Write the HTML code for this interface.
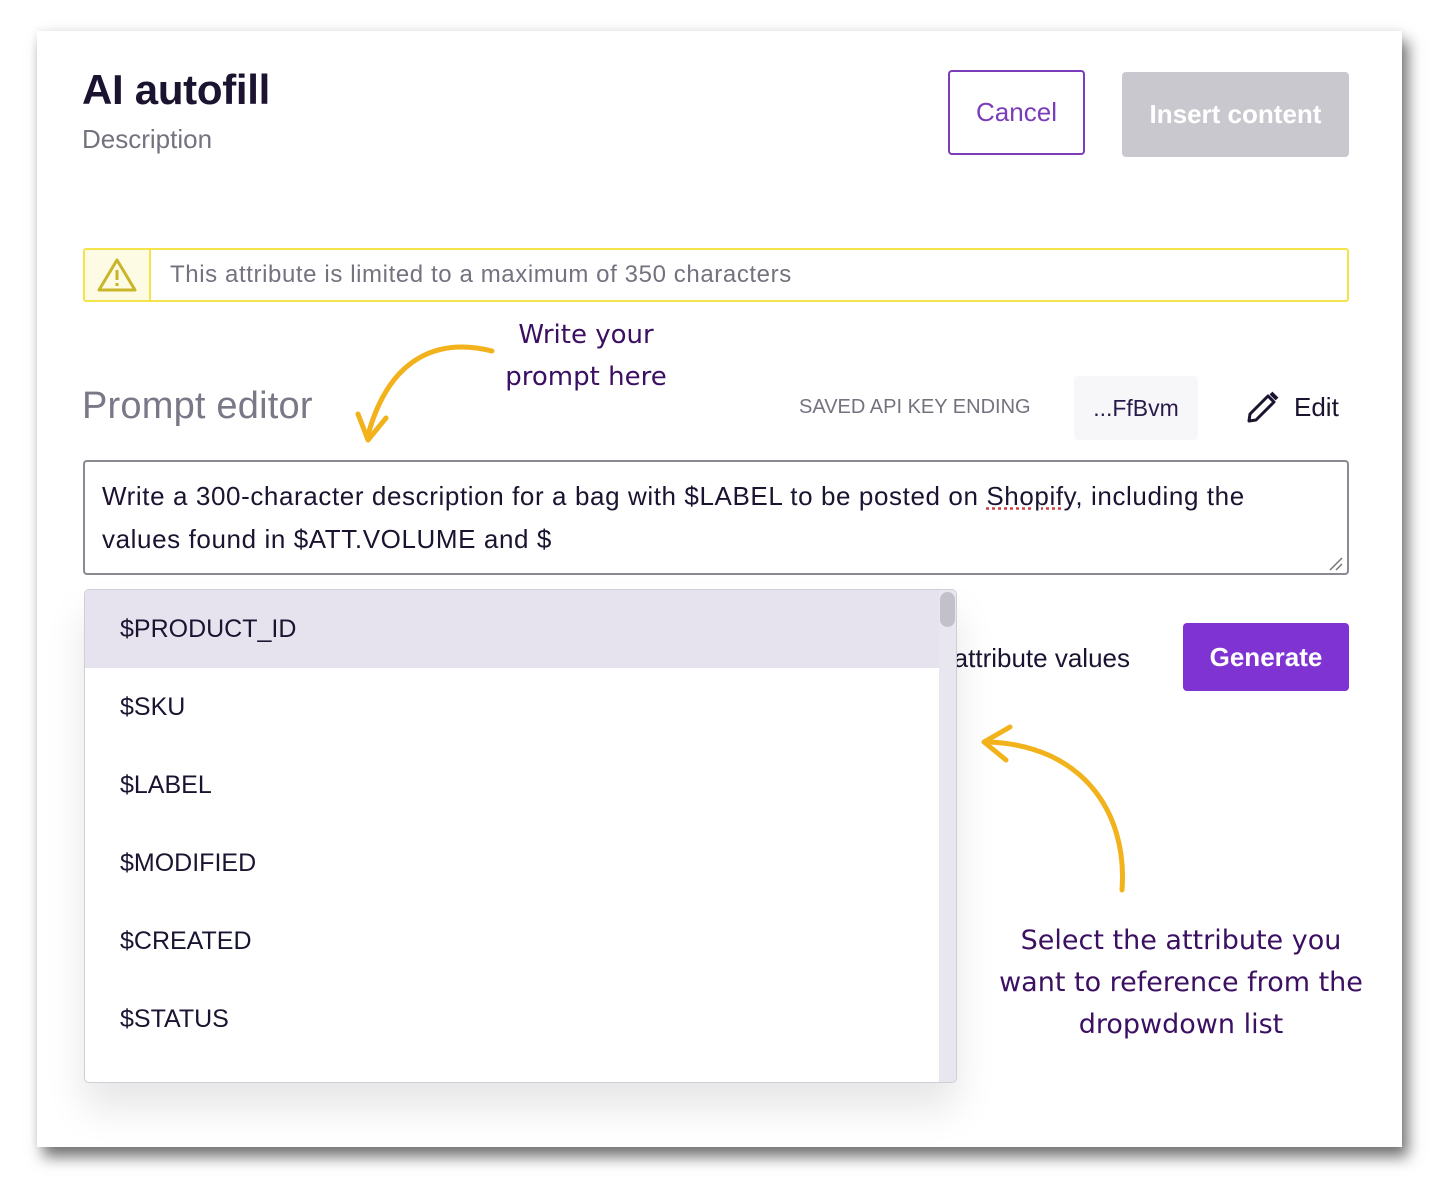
<!DOCTYPE html>
<html><head><meta charset="utf-8"><style>
*{box-sizing:border-box;margin:0;padding:0}
body{width:1437px;height:1200px;background:#fff;position:relative;overflow:hidden;font-family:"Liberation Sans",sans-serif}
.abs{position:absolute;white-space:nowrap}
.card{position:absolute;left:37px;top:31px;width:1365px;height:1116px;background:#fff;box-shadow:6px 10px 14px rgba(0,0,0,.55),0 -2px 8px rgba(0,0,0,.06)}
.ann{color:#3b0f62;font-family:"DejaVu Sans",sans-serif;font-size:26px;text-align:center;line-height:42px}
</style></head><body>
<div class="card"></div>
<div class="abs" style="left:82px;top:66px;font-size:42px;font-weight:bold;color:#1b1330;letter-spacing:-.3px">AI autofill</div>
<div class="abs" style="left:82px;top:124px;font-size:26px;color:#75727f">Description</div>
<div class="abs" style="left:948px;top:70px;width:137px;height:85px;border:2px solid #7a3cb8;border-radius:4px;color:#7a3cb8;font-size:26px;display:flex;align-items:center;justify-content:center">Cancel</div>
<div class="abs" style="left:1122px;top:72px;width:227px;height:85px;background:#c9c8cf;border-radius:4px;color:#fff;font-size:26px;font-weight:bold;display:flex;align-items:center;justify-content:center">Insert content</div>

<div class="abs" style="left:83px;top:248px;width:1266px;height:54px;border:2px solid #f2e44a;border-radius:3px"></div>
<div class="abs" style="left:85px;top:250px;width:66px;height:50px;background:#fdfbe3;border-right:2px solid #f2e44a"></div>
<svg class="abs" style="left:96px;top:257px" width="42" height="36" viewBox="0 0 42 36"><path d="M21 3 L39 33 L3 33 Z" fill="none" stroke="#c9b52a" stroke-width="3" stroke-linejoin="round"/><rect x="19.5" y="13" width="3" height="10" fill="#c9b52a"/><rect x="19.5" y="26" width="3" height="3" fill="#c9b52a"/></svg>
<div class="abs" style="left:170px;top:261px;font-size:24px;color:#75727f;letter-spacing:.6px">This attribute is limited to a maximum of 350 characters</div>

<div class="abs ann" style="left:486px;top:314px;width:200px">Write your<br>prompt here</div>
<svg class="abs" style="left:340px;top:330px" width="170" height="130"><path d="M152 21 C100 8 50 25 28 105" fill="none" stroke="#f2b21c" stroke-width="5" stroke-linecap="round"/><path d="M18 84 L28 110 L46 88" fill="none" stroke="#f2b21c" stroke-width="5" stroke-linecap="round" stroke-linejoin="round"/></svg>

<div class="abs" style="left:82px;top:385px;font-size:38px;color:#7a7787;letter-spacing:.2px">Prompt editor</div>
<div class="abs" style="left:799px;top:396px;font-size:20px;color:#75727f">SAVED API KEY ENDING</div>
<div class="abs" style="left:1074px;top:376px;width:124px;height:64px;background:#f7f7fa;border-radius:4px;color:#2a1a4a;font-size:23px;display:flex;align-items:center;justify-content:center">...FfBvm</div>
<svg class="abs" style="left:1244px;top:390px" width="36" height="36" viewBox="0 0 36 36"><path d="M5 31 L6 24 L24 6 L30 12 L12 30 Z" fill="none" stroke="#1b1330" stroke-width="3" stroke-linejoin="round"/><path d="M27 3 L33 9" stroke="#1b1330" stroke-width="4"/></svg>
<div class="abs" style="left:1294px;top:392px;font-size:26px;color:#1b1330">Edit</div>

<div class="abs" style="left:83px;top:460px;width:1266px;height:115px;border:2px solid #8a8890;border-radius:4px"></div>
<div class="abs" style="left:102px;top:475px;font-size:26px;color:#1b1330;letter-spacing:.6px;line-height:43px">Write a 300-character description for a bag with $LABEL to be posted on <span style="text-decoration:underline dotted #d04040">Shopify</span>, including the<br>values found in $ATT.VOLUME and $</div>
<svg class="abs" style="left:1328px;top:556px" width="16" height="16"><path d="M2 14 L14 2 M8 14 L14 8" stroke="#777" stroke-width="1.5"/></svg>

<div class="abs" style="right:307px;top:643px;font-size:26px;color:#1b1330">attribute values</div>
<div class="abs" style="left:1183px;top:623px;width:166px;height:68px;background:#7f33d3;border-radius:4px;color:#fff;font-size:26px;font-weight:bold;display:flex;align-items:center;justify-content:center">Generate</div>

<div class="abs" style="left:84px;top:589px;width:873px;height:494px;background:#fff;border:1px solid #cfcdd6;border-radius:5px;box-shadow:0 25px 40px rgba(0,0,0,.1);overflow:hidden">
<div style="position:absolute;left:0;top:0;width:856px;height:78px;background:#e6e3ee"></div>
<div style="position:absolute;right:0;top:0;width:17px;height:494px;background:#e8e6ee"></div>
<div style="position:absolute;right:1px;top:2px;width:15px;height:35px;background:#c2c0c8;border-radius:8px"></div>
<div style="position:absolute;left:35px;top:0;font-size:25px;color:#1b1330;line-height:78px">$PRODUCT_ID<br>$SKU<br>$LABEL<br>$MODIFIED<br>$CREATED<br>$STATUS</div>
</div>

<svg class="abs" style="left:970px;top:720px" width="170" height="180"><path d="M152 170 C158 90 110 25 18 22" fill="none" stroke="#f2b21c" stroke-width="5" stroke-linecap="round"/><path d="M40 7 L14 22 L36 40" fill="none" stroke="#f2b21c" stroke-width="5" stroke-linecap="round" stroke-linejoin="round"/></svg>
<div class="abs ann" style="left:960px;top:920px;width:442px;font-size:27px">Select the attribute you<br>want to reference from the<br>dropwdown list</div>
</body></html>
